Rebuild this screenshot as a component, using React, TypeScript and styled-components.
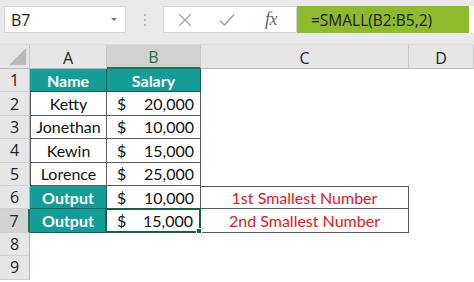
import styled, { createGlobalStyle } from "styled-components";

const GlobalStyle = createGlobalStyle`
  html, body {
    margin: 0;
    padding: 0;
    background: #ffffff;
  }
  body {
    font-family: Lato, "Open Sans", sans-serif;
    overflow: hidden;
  }
`;

const Page = styled.div`
  width: 474px;
  height: 282px;
  overflow: hidden;
  background: #ffffff;
`;

/* ---------- formula bar ---------- */

const FormulaBar = styled.div`
  display: flex;
  align-items: flex-start;
  height: 45px;
  padding: 6px 0 0 4px;
  box-sizing: border-box;
  background: #e9e9e9;
  border-bottom: 1px solid #dadada;
`;

const NameBox = styled.div`
  width: 122px;
  height: 27px;
  box-sizing: border-box;
  background: #ffffff;
  border: 1px solid #d6d6d6;
  display: flex;
  align-items: center;
  justify-content: space-between;
  padding: 0 6px 0 6px;
  font-family: "Open Sans", sans-serif;
  font-size: 16px;
  color: #222;
`;

const DropArrow = styled.span`
  width: 0;
  height: 0;
  border-left: 3px solid transparent;
  border-right: 3px solid transparent;
  border-top: 3px solid #777;
  margin-right: 2px;
`;

const Dots = styled.div`
  width: 37px;
  height: 27px;
  display: flex;
  flex-direction: column;
  align-items: center;
  justify-content: center;
  gap: 3px;

  span {
    width: 2px;
    height: 2px;
    border-radius: 1px;
    background: #a8a8a8;
  }
`;

const EditBox = styled.div`
  width: 134px;
  height: 27px;
  box-sizing: border-box;
  background: #ffffff;
  border: 1px solid #d6d6d6;
  display: flex;
  align-items: center;
  padding-left: 14px;
`;

const IconSlot = styled.div<{ $w: number }>`
  width: ${(p) => p.$w}px;
  display: flex;
  align-items: center;
  justify-content: flex-start;
`;

const Fx = styled.span`
  font-family: "Liberation Serif", serif;
  font-style: italic;
  font-size: 18px;
  color: #6a6a6a;
  letter-spacing: -0.5px;
`;

const FormulaInput = styled.div`
  flex: 1;
  height: 27px;
  box-sizing: border-box;
  background: #ffffff;
  display: flex;
  padding-right: 5px;
`;

const FormulaText = styled.div`
  flex: 1;
  background: #8dbb2b;
  display: flex;
  align-items: center;
  padding-left: 14px;
  font-family: "Open Sans", sans-serif;
  font-size: 15.5px;
  color: #1c1c1c;
`;

/* ---------- sheet grid ---------- */

const Sheet = styled.div`
  display: grid;
  grid-template-columns: 30px 77px 94px 208px 1fr;
  grid-template-rows: 24px repeat(9, 23.4px);
  background: #ffffff;
`;

const Corner = styled.div`
  background: #e6e6e6;
  border-right: 1px solid #c6c6c6;
  border-bottom: 1px solid #b8b8b8;
  position: relative;

  &::after {
    content: "";
    position: absolute;
    right: 3px;
    bottom: 3px;
    border-left: 17px solid transparent;
    border-bottom: 17px solid #b9b9b9;
  }
`;

const ColHead = styled.div<{ $active?: boolean }>`
  background: ${(p) => (p.$active ? "#d2d2d2" : "#e6e6e6")};
  color: ${(p) => (p.$active ? "#217346" : "#222")};
  border-right: 1px solid #c6c6c6;
  border-bottom: ${(p) => (p.$active ? "2px solid #217346" : "1px solid #b8b8b8")};
  display: flex;
  align-items: center;
  justify-content: center;
  font-family: "Open Sans", sans-serif;
  font-size: 16px;
  padding-top: 2px;
  box-sizing: border-box;
`;

const RowHead = styled.div<{ $active?: boolean }>`
  background: ${(p) => (p.$active ? "#d2d2d2" : "#e6e6e6")};
  color: #222;
  border-bottom: 1px solid #cfcfcf;
  border-right: ${(p) => (p.$active ? "2px solid #217346" : "1px solid #b8b8b8")};
  display: flex;
  align-items: center;
  justify-content: center;
  font-family: "Open Sans", sans-serif;
  font-size: 16px;
  box-sizing: border-box;
`;

type CellKind = "plain" | "teal" | "empty";

const Cell = styled.div<{
  $kind: CellKind;
  $top?: boolean;
  $left?: boolean;
  $red?: boolean;
}>`
  box-sizing: border-box;
  position: relative;
  display: flex;
  align-items: center;
  justify-content: center;
  font-family: Lato, sans-serif;
  font-size: 16px;
  font-weight: ${(p) => (p.$kind === "teal" ? 700 : 400)};
  background: ${(p) => (p.$kind === "teal" ? "#139d96" : "#ffffff")};
  color: ${(p) =>
    p.$kind === "teal" ? "#ffffff" : p.$red ? "#e8141f" : "#111"};
  border-right: ${(p) =>
    p.$kind === "empty" ? "none" : p.$kind === "teal" ? "1px solid #1d5f5b" : "1px solid #5c5c5c"};
  border-bottom: ${(p) =>
    p.$kind === "empty" ? "none" : p.$kind === "teal" ? "1px solid #1d5f5b" : "1px solid #5c5c5c"};
  border-top: ${(p) => (p.$top ? "1px solid #5c5c5c" : "none")};
  border-left: ${(p) => (p.$left ? "1px solid #5c5c5c" : "none")};
`;

const Money = styled.div<{ $selected?: boolean }>`
  position: absolute;
  inset: ${(p) => (p.$selected ? "-1px -1px -1px -2px" : "0")};
  display: flex;
  align-items: center;
  justify-content: space-between;
  padding: 0 6px 0 10px;
  border: ${(p) => (p.$selected ? "2px solid #1d5b4c" : "none")};
  box-sizing: border-box;
  z-index: 1;
`;

const Handle = styled.span`
  position: absolute;
  right: -3px;
  bottom: -3px;
  width: 4px;
  height: 4px;
  background: #1d5b4c;
  border: 1px solid #ffffff;
`;

const names = ["Ketty", "Jonethan", "Kewin", "Lorence"];
const salaries = ["20,000", "10,000", "15,000", "25,000"];

function CloseIcon() {
  return (
    <svg width="14" height="14" viewBox="0 0 14 14">
      <path d="M1 1 L13 13 M13 1 L1 13" stroke="#a6a6a6" strokeWidth="1.3" fill="none" />
    </svg>
  );
}

function CheckIcon() {
  return (
    <svg width="16" height="14" viewBox="0 0 16 14">
      <path d="M1 7.5 L5.5 12 L15 1.5" stroke="#a6a6a6" strokeWidth="1.6" fill="none" />
    </svg>
  );
}

function Amount({ value, selected }: { value: string; selected?: boolean }) {
  return (
    <Money $selected={selected}>
      <span>$</span>
      <span>{value}</span>
      {selected && <Handle />}
    </Money>
  );
}

export default function App() {
  return (
    <Page>
      <GlobalStyle />
      <FormulaBar>
        <NameBox>
          <span>B7</span>
          <DropArrow />
        </NameBox>
        <Dots>
          <span />
          <span />
          <span />
        </Dots>
        <EditBox>
          <IconSlot $w={41}>
            <CloseIcon />
          </IconSlot>
          <IconSlot $w={46}>
            <CheckIcon />
          </IconSlot>
          <IconSlot $w={30}>
            <Fx>fx</Fx>
          </IconSlot>
        </EditBox>
        <FormulaInput>
          <FormulaText>=SMALL(B2:B5,2)</FormulaText>
        </FormulaInput>
      </FormulaBar>

      <Sheet>
        <Corner />
        <ColHead>A</ColHead>
        <ColHead $active>B</ColHead>
        <ColHead>C</ColHead>
        <ColHead>D</ColHead>

        <RowHead>1</RowHead>
        <Cell $kind="teal">Name</Cell>
        <Cell $kind="teal">Salary</Cell>
        <Cell $kind="empty" />
        <Cell $kind="empty" />

        {names.map((n, i) => [
          <RowHead key={`h${i}`}>{i + 2}</RowHead>,
          <Cell key={`a${i}`} $kind="plain" $left>
            {n}
          </Cell>,
          <Cell key={`b${i}`} $kind="plain">
            <Amount value={salaries[i]} />
          </Cell>,
          <Cell key={`c${i}`} $kind="empty" />,
          <Cell key={`d${i}`} $kind="empty" />,
        ])}

        <RowHead>6</RowHead>
        <Cell $kind="teal">Output</Cell>
        <Cell $kind="plain">
          <Amount value="10,000" />
        </Cell>
        <Cell $kind="plain" $top $red>
          1st Smallest Number
        </Cell>
        <Cell $kind="empty" />

        <RowHead $active>7</RowHead>
        <Cell $kind="teal">Output</Cell>
        <Cell $kind="plain">
          <Amount value="15,000" selected />
        </Cell>
        <Cell $kind="plain" $red>
          2nd Smallest Number
        </Cell>
        <Cell $kind="empty" />

        <RowHead>8</RowHead>
        <Cell $kind="empty" />
        <Cell $kind="empty" />
        <Cell $kind="empty" />
        <Cell $kind="empty" />

        <RowHead>9</RowHead>
        <Cell $kind="empty" />
        <Cell $kind="empty" />
        <Cell $kind="empty" />
        <Cell $kind="empty" />
      </Sheet>
    </Page>
  );
}
